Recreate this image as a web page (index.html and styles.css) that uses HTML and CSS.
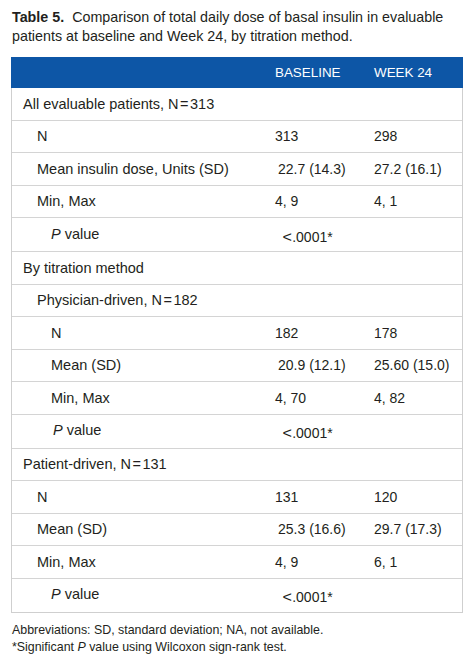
FILE: index.html
```html
<!DOCTYPE html>
<html>
<head>
<meta charset="utf-8">
<link rel="stylesheet" href="styles.css">
</head>
<body>
<div class="page">
  <p class="caption"><b class="tno">Table 5.</b> Comparison of total daily dose of basal insulin in evaluable patients at baseline and Week 24, by titration method.</p>
  <div class="table">
    <div class="row head">
      <div class="cell lbl"></div>
      <div class="cell">BASELINE</div>
      <div class="cell">WEEK 24</div>
    </div>
    <div class="row"><div class="cell lbl l0">All evaluable patients, N<span class="eq">=</span>313</div></div>
    <div class="row"><div class="cell lbl l1">N</div><div class="cell">313</div><div class="cell">298</div></div>
    <div class="row"><div class="cell lbl l1">Mean insulin dose, Units (SD)</div><div class="cell sp">22.7 (14.3)</div><div class="cell">27.2 (16.1)</div></div>
    <div class="row"><div class="cell lbl l1">Min, Max</div><div class="cell">4, 9</div><div class="cell">4, 1</div></div>
    <div class="row p"><div class="cell lbl l2"><i>P</i> value</div><div class="cell pv"><span class="lt">&lt;</span>.0001*</div><div class="cell"></div></div>
    <div class="row"><div class="cell lbl l0">By titration method</div></div>
    <div class="row"><div class="cell lbl l1">Physician-driven, N<span class="eq">=</span>182</div></div>
    <div class="row"><div class="cell lbl l2">N</div><div class="cell">182</div><div class="cell">178</div></div>
    <div class="row"><div class="cell lbl l2">Mean (SD)</div><div class="cell sp">20.9 (12.1)</div><div class="cell">25.60 (15.0)</div></div>
    <div class="row"><div class="cell lbl l2">Min, Max</div><div class="cell">4, 70</div><div class="cell">4, 82</div></div>
    <div class="row p"><div class="cell lbl l3"><i>P</i> value</div><div class="cell pv"><span class="lt">&lt;</span>.0001*</div><div class="cell"></div></div>
    <div class="row"><div class="cell lbl l0">Patient-driven, N<span class="eq">=</span>131</div></div>
    <div class="row"><div class="cell lbl l1">N</div><div class="cell">131</div><div class="cell">120</div></div>
    <div class="row"><div class="cell lbl l1">Mean (SD)</div><div class="cell sp">25.3 (16.6)</div><div class="cell">29.7 (17.3)</div></div>
    <div class="row"><div class="cell lbl l1">Min, Max</div><div class="cell">4, 9</div><div class="cell">6, 1</div></div>
    <div class="row p last"><div class="cell lbl l2"><i>P</i> value</div><div class="cell pv"><span class="lt">&lt;</span>.0001*</div><div class="cell"></div></div>
  </div>
  <div class="notes">
    <p>Abbreviations: SD, standard deviation; NA, not available.</p>
    <p>*Significant <i>P</i> value using Wilcoxon sign-rank test.</p>
  </div>
</div>
</body>
</html>
```
FILE: styles.css
```css
html, body {
  margin: 0;
  padding: 0;
  background: #ffffff;
}
body {
  font-family: "Liberation Sans", Arial, sans-serif;
  color: #231f20;
}
.page {
  padding: 8px 11px 0 11px;
  width: 452px;
}
.caption {
  width: 445px;
  margin: 0 0 11px 1px;
  font-size: 14.3px;
  line-height: 19px;
}
.caption .tno {
  font-weight: bold;
  margin-right: 4px;
}
.table {
  width: 452px;
  box-sizing: border-box;
  border-left: 1px solid #cfcfcf;
  border-right: 1px solid #cfcfcf;
  font-size: 14px;
}
.row {
  display: grid;
  grid-template-columns: 263px 99px 1fr;
  align-items: center;
  height: 32.5px;
  box-sizing: border-box;
  border-bottom: 1px solid #d4d4d4;
}
.row.p {
  height: 34px;
}
.row.last {
  border-bottom-color: #cfcfcf;
}
.row.head {
  height: 31px;
  background: #0d56a6;
  color: #ffffff;
  border-bottom: none;
  margin: 0 -1px;
  padding: 0 1px;
  font-size: 13.4px;
}
.row.head .cell {
  padding-top: 1px;
}
.cell {
  white-space: nowrap;
  line-height: 16px;
}
.lbl {
  font-size: 14.5px;
}
.lbl.l0 { padding-left: 11px; }
.lbl.l1 { padding-left: 25px; }
.lbl.l2 { padding-left: 39px; }
.lbl.l3 { padding-left: 41px; }
.row.p .lbl { padding-bottom: 2px; }
.sp { padding-left: 3px; }
.pv {
  padding-left: 8px;
  padding-top: 4px;
}
.lt {
  display: inline-block;
  margin-right: 1px;
  transform: scaleX(1.15);
}
.eq {
  padding: 0 1.5px;
}
.notes {
  margin-top: 9px;
  font-size: 12.4px;
  line-height: 17px;
  padding-left: 1px;
}
.notes p {
  margin: 0;
}
```
